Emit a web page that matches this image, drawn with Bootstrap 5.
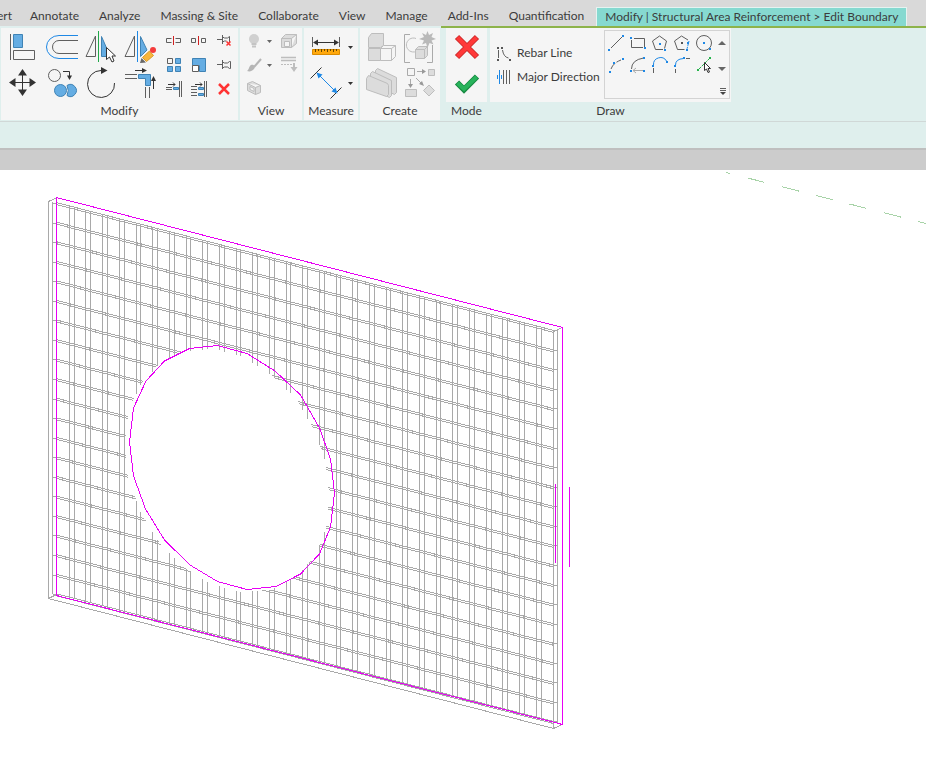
<!DOCTYPE html>
<html lang="en">
<head>
<meta charset="utf-8">
<meta name="viewport" content="width=device-width, initial-scale=1">
<title>Structural Area Reinforcement</title>
<link rel="stylesheet" href="https://cdn.jsdelivr.net/npm/bootstrap@5.3.0/dist/css/bootstrap.min.css">
<style>
body{font-family:Lato,"Open Sans",sans-serif;font-size:12px;line-height:18px;color:#3c3c3c;background:#fff}
button{font:inherit;color:inherit;border:0;background:none;padding:0}
button:hover{background-color:#d5e9f5}
svg{display:block;fill:none;stroke:#5f5f5f}
.tabs{background:#d9d9d9;height:26px;padding-top:7px}
.tabs a{color:#3c3c3c;padding:0 10px;text-decoration:none;white-space:nowrap}
.tabs .cut{padding:0 8px 0 0;margin-left:-3px}
.tabs .current{background:#86d9d0;border:solid #e6f3f1;border-width:1px 1px 0;padding:0 8px;margin-left:2px;height:19px;line-height:17px}
.accent{display:grid;grid-template-columns:441px 1fr;height:2px;background:#e0efee}
.accent i{grid-column:2;background:#8db34a}
.ribbon{background:#dfefed;height:94px;border-bottom:1px solid #d0d8d7;padding:0 0 1px 1px;gap:2px}
.panel{background:#f5f5f5}
.panel h2{font-size:12px;line-height:18px;margin:0;text-align:center;font-weight:400}
.panel .tools{height:74px;padding-top:1px}
.tinted h2{background:#dfefed}
.modify .tools{padding-left:2px;gap:2px}
.draw .tools{padding:1px 1px 0 6px}
.draw .tools button{gap:3px}
.big{display:grid;grid-template-columns:repeat(4,39px);grid-auto-rows:36px}
.little{display:grid;grid-template-columns:repeat(3,25px);grid-auto-rows:24px}
.views{display:grid;grid-template-columns:32px 22px;grid-auto-rows:24px}
.create{display:grid;grid-template-columns:repeat(2,38px);grid-auto-rows:36px}
.modify{width:237px}.view{width:62px}.measure{width:54px}.makes{width:80px}.mode{width:41px;margin-left:4px}.draw{width:241px;margin-left:1px}
.gallery{border:1px solid #d3d3d3;width:126px;height:69px;margin-top:1px}
.shapes{display:grid;grid-template-columns:repeat(5,22px);grid-auto-rows:22px;padding-top:1px}
.options{border-bottom:2px solid #bfbfbf;background:#dfefed;height:28px}
.gap-bar{background:#ccc;height:20px}
.b{fill:#65ade3;stroke:#3f83b5}
.bs{stroke:#1e88e5}.k{stroke:#333}.kf{fill:#333;stroke:none}.red{stroke:#d12020}
.dot{fill:#1e88e5;stroke:none}.dim{stroke:#bdbdbd;fill:#dcdcdc}.dn{stroke:#bdbdbd}
.crisp{shape-rendering:crispEdges}
.model{overflow:hidden}
#rebar{stroke:#a9a9a9}
.sketch{stroke:#e800f5}
</style>
</head>
<body class="d-flex flex-column min-vh-100">
<nav class="tabs d-flex overflow-hidden" aria-label="Ribbon tabs">
<a class="cut" href="#">ert</a><a href="#">Annotate</a><a href="#">Analyze</a><a href="#">Massing &amp; Site</a><a href="#">Collaborate</a><a href="#">View</a><a href="#">Manage</a><a href="#">Add-Ins</a><a href="#">Quantification</a><a class="current" href="#" aria-current="page">Modify | Structural Area Reinforcement &gt; Edit Boundary</a>
</nav>
<div class="accent"><i></i></div>
<div class="ribbon d-flex">
<section class="panel modify"><div class="tools d-flex">
<div class="big">
<button aria-label="Align"><svg width="39" height="36" viewBox="3 29 39 36"><path d="M10.500 34V60M13.500 50.500h21v9h-21z"/><path class="b" d="M13.500 34.500h9v13h-9z"/></svg></button>
<button aria-label="Offset"><svg width="39" height="36" viewBox="42 29 39 36"><path class="bs" d="M78 35.500H59a12.500 11.500 0 0 0 0 23H78"/><path d="M78 40.500H59a6.500 6.500 0 0 0 0 13H78"/></svg></button>
<button aria-label="Mirror - Pick Axis"><svg width="39" height="36" viewBox="81 29 39 36"><path d="M86 56.500 95.500 36v20.500z"/><path d="M98.500 31v31" stroke="#21a84a"/><path class="b" d="M101.500 36.500 107 49v7.500h-5.500z"/><path class="k" fill="#fff" d="M106.500 47.500v12l3-2.500 2.500 5 2-1-2-5h3.500z"/></svg></button>
<button aria-label="Mirror - Draw Axis"><svg width="39" height="36" viewBox="120 29 39 36"><path d="M125 56.500 134.500 36v20.500z"/><path class="bs" d="M137.500 31v31"/><path class="b" d="M140.500 36.500 147 50l-6.500 6.500z"/><path fill="#f8b63c" stroke="#d99a28" d="m142.500 57.500 7-6.500 4 4.500-7 6z"/><path fill="#666" stroke="none" d="m141.500 58 4.500 4.500-6 .5z"/><circle cx="153" cy="50" r="3" fill="#f43b3b" stroke="none"/></svg></button>
<button aria-label="Move"><svg width="39" height="36" viewBox="3 65 39 36"><path class="k" d="M12 82.500h21M22.500 72v21"/><path class="kf" d="m9 82.500 6.500-4.500v9zM36 82.500l-6.500-4.500v9zM22.500 69 18 75.500h9zM22.500 96 18 89.500h9z"/></svg></button>
<button aria-label="Copy"><svg width="39" height="36" viewBox="42 65 39 36"><circle cx="54.500" cy="75.500" r="6"/><path class="k" d="M63 71.500h6.500V77"/><path class="kf" d="M67 75.500h5L69.500 80z"/><circle class="b" cx="60.500" cy="90.500" r="6"/><path class="b" d="M67 85.500a6 6 0 1 1 0 10q2.500-5 0-10z"/></svg></button>
<button aria-label="Rotate"><svg width="39" height="36" viewBox="81 65 39 36"><path class="k" d="M114.500 83A13.500 13.500 0 1 1 101 70.500"/><path class="kf" d="m101 67 6.500 3.500L101 74z"/></svg></button>
<button aria-label="Trim/Extend to Corner"><svg width="39" height="36" viewBox="120 65 39 36"><path d="M125 74.500h12M125 78.500h12M145.500 87v11M149.500 87v11"/><path class="b" d="M138.500 74.500h12v11h-5v-7h-7z"/><path class="k" d="M135 70.500h8M153.500 89V80"/><path class="kf" d="M142 68v5l5-2.500zM151 81h5l-2.500-5z"/></svg></button>
</div>
<div class="little">
<button aria-label="Split Element"><svg width="25" height="24" viewBox="161 29 25 24"><path d="M171.500 38.500h-5v4h5M175.500 38.500h5v4h-5"/><path class="red" d="M173.500 36v9"/></svg></button>
<button aria-label="Split with Gap"><svg width="25" height="24" viewBox="186 29 25 24"><path d="M191.500 38.500h4v4h-4zM201.500 38.500h4v4h-4z"/><path class="red" d="M198.500 36v9"/></svg></button>
<button aria-label="Unpin"><svg width="25" height="24" viewBox="211 29 25 24"><path d="M217 39.500h5M222.500 35v9M222.500 37l2 1h3l2-1.500v6M222.500 42l2-1h2"/><path d="m226.500 41.500 4 4m0-4-4 4" stroke="#f33" stroke-width="1.500"/></svg></button>
<button aria-label="Array"><svg width="25" height="24" viewBox="161 53 25 24"><path d="M167.500 58.500h5v5h-5z"/><path class="b" d="M175.500 58.500h5v5h-5zM167.500 66.500h5v5h-5zM175.500 66.500h5v5h-5z"/></svg></button>
<button aria-label="Scale"><svg width="25" height="24" viewBox="186 53 25 24"><path class="b" d="M192.500 58.500h13v13h-6v-6h-7z"/><path fill="#fff" d="M192.500 65.500h6v6h-6z"/></svg></button>
<button aria-label="Pin"><svg width="25" height="24" viewBox="211 53 25 24"><path d="M217 64.500h5M222.500 60v9M222.500 62l2 1h3l2-1.500h1v7h-1l-2-1.500h-3l-2 1"/></svg></button>
<button aria-label="Trim/Extend Single"><svg width="25" height="24" viewBox="161 77 25 24"><path d="M166 87.500h6M166 89.500h6M179.500 81v16M181.500 81v16"/><path class="b" d="M173.500 87.500h5v2h-5z"/><path class="k" d="M168 84.500h7M173 82.500l2 2-2 2"/></svg></button>
<button aria-label="Trim/Extend Multiple"><svg width="25" height="24" viewBox="186 77 25 24"><path d="M191 86.500h6M191 89.500h6M191 92.500h6M191 95.500h6M204.500 81v16M206.500 81v16"/><path class="b" d="M198.500 87.500h5v2h-5zM198.500 93.500h5v2h-5z"/><path class="k" d="M195 84.500h7M200 82.500l2 2-2 2"/></svg></button>
<button aria-label="Delete"><svg width="25" height="24" viewBox="211 77 25 24"><path d="m219 84 10 10m0-10-10 10" stroke="#f33" stroke-width="2.500"/></svg></button>
</div></div><h2>Modify</h2></section>

<section class="panel view"><div class="tools ps-1"><div class="views">
<button aria-label="Hide in View"><svg width="32" height="24" viewBox="244 29 32 24"><circle cx="254" cy="39" r="5" fill="#d0d0d0" stroke="none"/><path d="M251.500 44h5M252 46.500h4" stroke="#c4c4c4" stroke-width="2"/><path fill="#666" stroke="none" d="M267 40h5l-2.500 3z"/></svg></button>
<button aria-label="Selection Box"><svg width="22" height="24" viewBox="276 29 22 24"><path class="dim" d="M281.500 38.500h10v9h-10zM281.500 38.500l4-4h11l-5 4M296.500 34.500v9l-5 4"/><path fill="#f5f5f5" stroke="#bdbdbd" d="M284.500 41.500h5v5h-5z"/></svg></button>
<button aria-label="Override Graphics"><svg width="32" height="24" viewBox="244 53 32 24"><path d="m261 59-7 8" stroke="#b5b5b5" stroke-width="2"/><path fill="#b5b5b5" stroke="none" d="M251 65c3-1 5 2 3 4s-4 3-7 2c2-1 2-5 4-6z"/><path fill="#666" stroke="none" d="M267 64h5l-2.500 3z"/></svg></button>
<button aria-label="Linework"><svg width="22" height="24" viewBox="276 53 22 24"><path class="dn" d="M281 57.500h15M281 60.500h15" stroke-width="1.500"/><path class="dn" stroke-dasharray="2 1" d="M281 64.500h11"/><path class="dn" stroke-width="2" d="M294 63v6"/><path fill="#bdbdbd" stroke="none" d="M290.500 67h7l-3.500 5z"/></svg></button>
<button aria-label="Displace Elements"><svg width="32" height="24" viewBox="244 77 32 24"><path class="dim" d="m247.500 83.500 5-2 8 4v7l-5 2-8-4zM247.500 83.500l8 4 5-2M255.500 87.500v7"/><path class="dn" fill="#f5f5f5" d="m250 86.500 4 2v3l-4-2z"/></svg></button>
</div></div><h2>View</h2></section>

<section class="panel measure"><div class="tools ps-1">
<button class="d-block" aria-label="Measure"><svg width="48" height="36" viewBox="308 29 48 36"><path d="M312.500 37v10M339.500 37v10"/><path class="k" d="M314 42.500h24"/><path class="kf" d="m313 42.500 5-3v6zM339 42.500l-5-3v6z"/><path fill="#ffa80c" stroke="#db8b00" d="M312.500 49.500h27v5h-27z"/><path d="M315.500 49v3M318.500 49v2M321.500 49v3M324.500 49v2M327.500 49v3M330.500 49v2M333.500 49v3M336.500 49v2" stroke="#664600"/><path class="kf" d="M348 46h5l-2.500 3z"/></svg></button>
<button class="d-block" aria-label="Aligned Dimension"><svg width="48" height="36" viewBox="308 65 48 36"><path class="k" d="m310.500 78.500 11-11M330.500 98.500l11-11"/><path class="bs" d="m318 74 18 18"/><path class="dot" d="m316.500 72.500 6 2-4 4zM337.500 93.500l-6-2 4-4z"/><path class="kf" d="M348 82h5l-2.500 3z"/></svg></button>
</div><h2>Measure</h2></section>

<section class="panel makes"><div class="tools ps-1"><div class="create">
<button aria-label="Create Assembly"><svg width="38" height="36" viewBox="364 29 38 36"><path class="dim" d="M368.500 37.500l3-4h12v12l-3 2h-12z"/><path class="dim" d="M368.500 48.500h12v12h-12z"/><path class="dn" fill="#f5f5f5" d="M380.500 48.500l3-3h12v11l-4 4h-11zM380.500 48.500h11v12M391.500 48.500l4-3"/></svg></button>
<button aria-label="Create Group"><svg width="38" height="36" viewBox="402 29 38 36"><path stroke="#aaa" d="M410 34.500h-5.500v28h5.500M427 62.500h5.500V45"/><path class="dn" d="M416 38.500a7 7 0 1 0 0 13"/><path class="dim" d="m415.500 49.500 3-3h9v9l-3 3h-9zM415.500 49.500h9v9M424.500 49.500l3-3"/><path fill="#b9b9b9" stroke="none" d="m427.500 31 1.500 4 4-2-1.500 4 4.500 2-4.500 1.500 2 4-4-1.500-2 5-1.500-5-4 1.500 2-4-5-1.500 5-2-2-4 4 2z"/></svg></button>
<button aria-label="Create Parts"><svg width="38" height="36" viewBox="364 65 38 36"><path class="dim" d="m375.500 70.500 2-2 19 9v15l-2 2-19-9z"/><path class="dim" d="m370.500 73.500 2-2 19 9v15l-2 2-19-9z"/><path class="dim" d="m366.500 78.500 2-3 19 8 1 2v9l-2 2-20-7z"/></svg></button>
<button aria-label="Create Similar"><svg width="38" height="36" viewBox="402 65 38 36"><path stroke="#aaa" d="M407.500 68.500h7v7h-7zM417 71.500h6M410.500 79v6M416 78l6 6"/><path fill="#999" stroke="none" d="M422 69v5l4-2.500zM408 84h5l-2.500 4zM424 86l-5-2 3-3z"/><path class="dim" d="M428.500 69.500h6v6h-6zM405.500 89.500h11v7h-11zM429 85l5.500 5.500L429 96l-5.500-5.500z"/></svg></button>
</div></div><h2>Create</h2></section>

<section class="panel tinted mode"><div class="tools">
<button class="d-block w-100" aria-label="Cancel Edit Mode"><svg class="mx-auto" width="30" height="36" viewBox="452 29 30 36"><path d="m457 37 20 20m0-20-20 20" stroke="#cc2a2a" stroke-width="6"/><path d="m457.500 37.500 19 19m0-19-19 19" stroke="#ff3838" stroke-width="4"/></svg></button>
<button class="d-block w-100" aria-label="Finish Edit Mode"><svg class="mx-auto" width="30" height="36" viewBox="452 65 30 36"><path d="m457 82.500 7 7 13-13" stroke="#168841" stroke-width="6"/><path d="m457.500 83 6.500 6 12.500-12" stroke="#27b35b" stroke-width="4"/></svg></button>
</div><h2>Mode</h2></section>

<section class="panel tinted draw"><div class="tools d-flex justify-content-between">
<div class="pt-2 text-nowrap">
<button class="d-flex align-items-center mt-1"><svg width="18" height="24" viewBox="496 40 18 24"><path d="M498.500 49v8M502.500 49q1 7 6 8" /><path fill="#555" stroke="none" d="M497 46h2v2h-2zM501 46h2v2h-2zM497 58h2v2h-2zM509 58h2v2h-2z"/></svg>Rebar Line</button>
<button class="d-flex align-items-center"><svg width="18" height="24" viewBox="496 65 18 24"><path class="bs" d="M497.500 75v4M499.500 70v14M501.500 75v4"/><path d="M503.500 70v14M506.500 70v14M509.500 70v14"/></svg>Major Direction</button>
</div>
<div class="gallery d-flex">
<div class="shapes">
<button aria-label="Line"><svg width="22" height="22" viewBox="605 32 22 22"><path d="m611 48 11-11"/><path class="dot" d="M608 49h2v2h-2zM622 35h2v2h-2z"/></svg></button>
<button aria-label="Rectangle"><svg width="22" height="22" viewBox="627 32 22 22"><path d="M634 38.500h10.500V47M643 47.500h-11.500V40"/><path class="dot" d="M630 37h2v2h-2zM644 47h2v2h-2z"/></svg></button>
<button aria-label="Inscribed Polygon"><svg width="22" height="22" viewBox="649 32 22 22"><path d="m659.500 36 7 5-2 7.500M663 49.500h-7.500l-3-8.500 7-5"/><path class="dot" d="M659 43h2v2h-2zM664 49h2v2h-2z"/></svg></button>
<button aria-label="Circumscribed Polygon"><svg width="22" height="22" viewBox="671 32 22 22"><path d="m688 40-6.500-4-7 5 3 8.500h7"/><path class="bs" stroke-dasharray="2 1" d="m689 41-2 8"/><path class="dot" d="M687 42h2v2h-2zM686 49h2v2h-2z"/><path fill="#555" stroke="none" d="M681 42h2v2h-2z"/></svg></button>
<button aria-label="Circle"><svg width="22" height="22" viewBox="693 32 22 22"><circle cx="704" cy="43" r="7.500"/><path class="dot" d="M703 42h2v2h-2zM709 48h2v2h-2z"/></svg></button>
<button aria-label="Start-End-Radius Arc"><svg width="22" height="22" viewBox="605 54 22 22"><path stroke-dasharray="7 2" d="M611 69q2-6 10-9"/><path class="dot" d="M609 71h2v2h-2zM613 62h2v2h-2zM622 58h2v2h-2z"/></svg></button>
<button aria-label="Center-ends Arc"><svg width="22" height="22" viewBox="627 54 22 22"><path d="M631.500 69q0-9 12-11"/><path stroke="#aaa" d="M633 70.500h10M636 68l-3 2.500 3 2.500"/><path class="dot" d="M630 70h2v2h-2zM643 57h2v2h-2zM643 70h2v2h-2z"/></svg></button>
<button aria-label="Tangent End Arc"><svg width="22" height="22" viewBox="649 54 22 22"><path d="M653.500 68v5"/><path class="bs" d="M653.500 65a7 7 0 0 1 13-4"/><path class="dot" d="M652 65h2v2h-2zM666 61h2v2h-2z"/></svg></button>
<button aria-label="Fillet Arc"><svg width="22" height="22" viewBox="671 54 22 22"><path d="M675.500 69v4M686 58.500h4"/><path class="bs" d="M675.500 65q0-6 8-6.500"/><path class="dot" d="M674 65h2v2h-2zM683 57h2v2h-2z"/></svg></button>
<button aria-label="Pick Lines"><svg width="22" height="22" viewBox="693 54 22 22"><path stroke="#27b34b" stroke-dasharray="3 1" d="m699 69 10-10"/><path fill="#27b34b" stroke="none" d="M697 69h2v2h-2zM709 57h2v2h-2z"/><path class="k" fill="#fff" d="M704.500 62.500v8l2-1.500 1.500 3.500 1.500-.5-1.500-3.500h2.500z"/></svg></button>
</div>
<div class="d-flex flex-column">
<button aria-label="Scroll up"><svg width="14" height="24" viewBox="715 32 14 24"><path fill="#666" stroke="none" d="M718 46h8l-4-4z"/></svg></button>
<button aria-label="Scroll down"><svg width="14" height="24" viewBox="715 56 14 24"><path fill="#666" stroke="none" d="M718 68h8l-4 4z"/></svg></button>
<button aria-label="Show gallery"><svg width="14" height="19" viewBox="715 80 14 19"><path fill="#444" stroke="none" d="M720 93h6l-3 3z"/><path d="M720 89.500h6M720 91.500h6"/></svg></button>
</div></div></div><h2>Draw</h2></section>
</div>
<div class="options"></div>
<div class="gap-bar"></div>
<main class="model flex-grow-1">
<svg width="926" height="600" viewBox="0 170 926 600" class="crisp" role="img" aria-label="Wall with area reinforcement and a circular opening">
<path d="M726 172.500 926 223.500" stroke="#a8d3a8" stroke-dasharray="4.500 18 16.500 18.500 17.500 17.500 17.500 17.500 17.500 18 17.500 18 17.500"/>
<g id="rebar"><path d="M57 197.500 48.500 201.500V598.500L553.500 728.500 562.500 724.500M48.500 598.500l8-4M52.500 202V594M557.500 329V723M553.500 331.500V728M553.500 331.500l9-4"/></g>
<path id="void" fill="#fff" stroke="none" transform="translate(-5 3)"/>
<g class="sketch"><path d="M56.500 197.500 562.500 327.500V724.500L56.500 595.500z"/><path id="opening"/><path d="M555.500 484v79M569.500 487v80"/></g>
</svg>
</main>
<script>
const loop = "M189.500 348.500 217.500 345.500 247 353.500 275 371 300.500 395 319.500 428 330.500 459 334.500 493 330.500 527 319.500 554 300.500 574 276 586.500 247 589.500 217.500 581.500 190 565 164.500 540 145.500 509 133.500 476 129.500 442 133.500 408 146 381 164.500 361z";
document.getElementById("void").setAttribute("d", loop);
document.getElementById("opening").setAttribute("d", loop);
let d = "";
for (let i = 0; i < 29; i++) {
  for (const s of [0, 4.7]) {
    const x = Math.floor(69.3 + 16.68 * i + s) + .5, y = 197.5 + (x - 56) * .257;
    d += `M${x} ${y + 5}V${y + 397}`;
  }
}
for (let k = -1; k < 20; k++) {
  const y = 222.3 + 19.56 * k;
  d += `M57 ${y}L554 ${y + 127.7}M57 ${y + 2}L554 ${y + 129.7}M53 ${y + .7}h3M553 ${y + 128}h4`;
}
const bars = document.createElementNS("http://www.w3.org/2000/svg", "path");
bars.setAttribute("d", d);
document.getElementById("rebar").append(bars);
</script>
<script src="https://cdn.jsdelivr.net/npm/bootstrap@5.3.0/dist/js/bootstrap.bundle.min.js"></script>
</body>
</html>
